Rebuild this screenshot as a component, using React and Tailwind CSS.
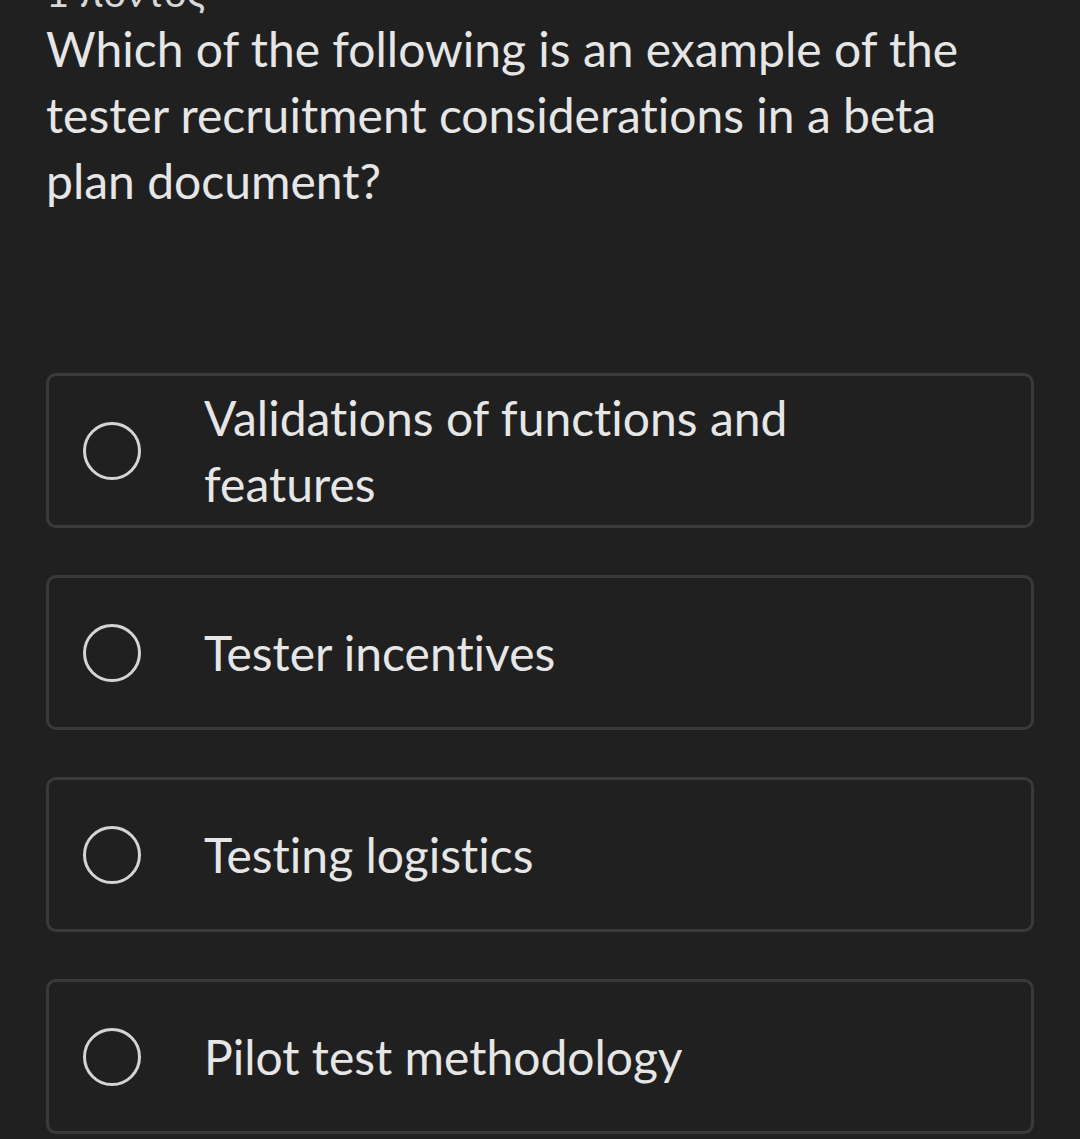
export default function App() {
  const options = [
    "Validations of functions and features",
    "Tester incentives",
    "Testing logistics",
    "Pilot test methodology",
  ];
  return (
    <div
      className="w-[1080px] h-[1139px] overflow-hidden bg-[#202020] text-[#e6e6e6] [font-variant-ligatures:none]"
      style={{ fontFamily: "Lato, 'Noto Sans', sans-serif" }}
    >
      <div className="pl-[46px] pr-[46px]">
        <div className="mt-[-32px] text-[40px] leading-[48px] text-[#d8d8d8]">1 πόντος</div>
        <div className="text-[48px] leading-[66px] pr-[40px]">
          Which of the following is an example of the tester recruitment considerations in a beta plan document?
        </div>
        <div className="mt-[159px] flex flex-col gap-[47px]">
          {options.map((o) => (
            <div
              key={o}
              className="h-[155px] w-[988px] rounded-[10px] border-[3px] border-[#3a3a3a] flex items-center"
            >
              <div className="ml-[34px] w-[58px] h-[58px] shrink-0 rounded-full border-[3px] border-[#d4d4d4]" />
              <div className="ml-[63px] pr-[200px] text-[48px] leading-[66px] text-[#e6e6e6]">{o}</div>
            </div>
          ))}
        </div>
      </div>
    </div>
  );
}
